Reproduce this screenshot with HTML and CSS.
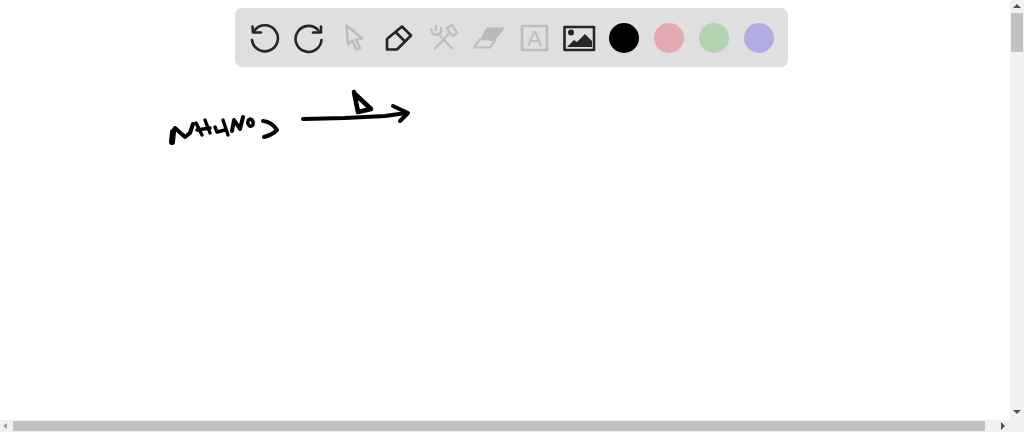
FILE: index.html
```html
<!DOCTYPE html>
<html lang="en">
<head>
<meta charset="utf-8">
<title>Whiteboard</title>
<link rel="stylesheet" href="styles.css">
</head>
<body>
<div class="window">
  <div class="upper">
    <main class="board">
      <div class="toolbar">
        <span class="slot"><svg class="icon" viewBox="0 0 32 32"><path class="line" d="M4.500 4.500l.5 6h8"/><path class="line" d="M6.500 8.500A13 13 0 1 1 4 18"/></svg></span>
        <span class="slot"><svg class="icon" viewBox="0 0 32 32"><path class="line" d="M28 4.500v6h-8"/><path class="line" d="M25.500 8.500A13 13 0 1 0 28.500 18"/></svg></span>
        <span class="slot"><svg class="icon" viewBox="0 0 32 32"><path class="line faint" d="M8.500 3.500l1.500 19 4.500-4 4 9 3.500-1.500-4-8.500 6-1z"/></svg></span>
        <span class="slot"><svg class="icon" viewBox="0 0 32 32"><path class="line" d="M4 27.500V17L19 4.500l9 9-14 14z"/><path class="line" d="M13 10.500l9 9"/></svg></span>
        <span class="slot"><svg class="icon" viewBox="0 0 32 32"><path class="line faint thin" d="M7 26.500L22 10.500M24 26.500L10 11.500"/><path class="line faint thin" d="M3 7c0 4 3 6.500 7 5.500 3-1 4-3 3-6.500M8 4v4"/><path class="line faint thin" d="M19 6l5-3 5.500 8-5 3z"/></svg></span>
        <span class="slot"><svg class="icon wide" viewBox="0 0 36 32"><path class="eraser-top" d="M16 5.500h18L24 18.500 9 17z"/><path class="line faint thin" d="M9 17l15 1.500-5 7H3z"/></svg></span>
        <span class="slot"><svg class="icon" viewBox="0 0 32 32"><rect class="line faint" x="4" y="4" width="25" height="24"/><text class="letter" x="16.500" y="24" text-anchor="middle">A</text></svg></span>
        <span class="slot"><svg class="icon wide" viewBox="0 0 36 32"><rect class="line" x="3.500" y="5" width="29.500" height="23"/><circle class="ink" cx="10" cy="10.500" r="3"/><path class="ink" d="M6 25l7-7 3 2 8-8 7 7v6z"/></svg></span>
        <span class="slot"><span class="dot black"></span></span>
        <span class="slot"><span class="dot pink"></span></span>
        <span class="slot"><span class="dot green"></span></span>
        <span class="slot"><span class="dot violet"></span></span>
      </div>
      <svg class="sketch" viewBox="0 0 1010 420" aria-hidden="true">
        <path class="pen blob" d="M172 142L173 132"/>
        <path class="pen" d="M173 131L175 128L185 137L190 133L193 124"/>
        <path class="pen thinpen" d="M196 123L202 135M197 130L210 128M205 120L210 133"/>
        <path class="pen thinpen" d="M215 127L217 132L225 130M223 120L228 135"/>
        <path class="pen" d="M232 131L234 120L240 129L243 117"/>
        <path class="pen thinpen" d="M250 119Q254 120 253 125Q250 128 248 124Q247 120 250 119z"/>
        <path class="pen" d="M263 121Q272 122 277 130Q272 135 264 137"/>
        <path class="pen" d="M303 119L345 118L385 116L406 113"/>
        <path class="pen" d="M393 106L408 113L400 121"/>
        <path class="pen heavy" d="M354 92L358 112L371 109L356 95"/>
      </svg>
    </main>
    <div class="vbar">
      <span class="arrow up"></span>
      <span class="vthumb"></span>
      <span class="arrow down"></span>
    </div>
  </div>
  <div class="hbar">
    <span class="arrow left"></span>
    <span class="hthumb"></span>
    <span class="arrow right"></span>
  </div>
</div>
</body>
</html>
```

FILE: styles.css
```css
* { box-sizing: border-box; }
html, body { margin: 0; height: 100%; overflow: hidden; background: #fff; }
.window { width: 1024px; height: 432px; display: flex; flex-direction: column; }
.upper { flex: 1; display: flex; min-height: 0; }
.board { position: relative; flex: 1; padding: 8px 0 0 235px; }
.toolbar {
  width: 553px; height: 59px; padding: 0 7px 0 6px;
  display: flex; align-items: center;
  background: #dfdfdf; border-radius: 7px;
}
.slot { width: 45px; height: 45px; display: flex; align-items: center; justify-content: center; }
.icon { width: 32px; height: 32px; display: block; }
.icon.wide { width: 36px; flex: none; }
.line { fill: none; stroke: #262626; stroke-width: 2.6; stroke-linecap: round; stroke-linejoin: round; }
.line.faint { stroke: #bdbdbd; }
.line.thin { stroke-width: 2.2; }
.eraser-top { fill: #b9b9b9; }
.ink { fill: #262626; }
.letter { font-family: "Liberation Sans", Arial, sans-serif; font-size: 22px; fill: #bdbdbd; }
.dot { width: 30px; height: 30px; border-radius: 50%; display: block; }
.black { background: #000; }
.pink { background: #e3a9b1; }
.green { background: #b2d2b0; }
.violet { background: #b1ace3; }
.sketch { position: absolute; left: 0; top: 0; width: 1010px; height: 420px; pointer-events: none; }
.pen { fill: none; stroke: #000; stroke-width: 4; stroke-linecap: round; stroke-linejoin: round; }
.pen.blob { stroke-width: 6; }
.pen.heavy { stroke-width: 4.6; }
.pen.thinpen { stroke-width: 3.4; }
.vbar { width: 14px; flex: none; position: relative; background: #f1f1f1; padding: 13px 1px 0; display: flex; flex-direction: column; }
.vthumb { display: block; height: 39px; background: #c1c1c1; }
.hbar { height: 12px; flex: none; display: flex; align-items: center; background: #f1f1f1; padding: 0 0 0 3px; }
.hthumb { display: block; width: 972px; height: 10px; margin-left: 6px; margin-right: 16px; background: #c1c1c1; }
.arrow { display: block; width: 0; height: 0; border-style: solid; border-color: transparent; }
.arrow.up { position: absolute; left: 3px; top: 4px; border-width: 0 4px 4px; border-bottom-color: #505050; }
.arrow.down { position: absolute; left: 3px; bottom: 6px; border-width: 4px 4px 0; border-top-color: #505050; }
.arrow.left { border-width: 3px 4px 3px 0; border-right-color: #a0a0a0; }
.arrow.right { border-width: 4px 0 4px 4px; border-left-color: #505050; }
```
